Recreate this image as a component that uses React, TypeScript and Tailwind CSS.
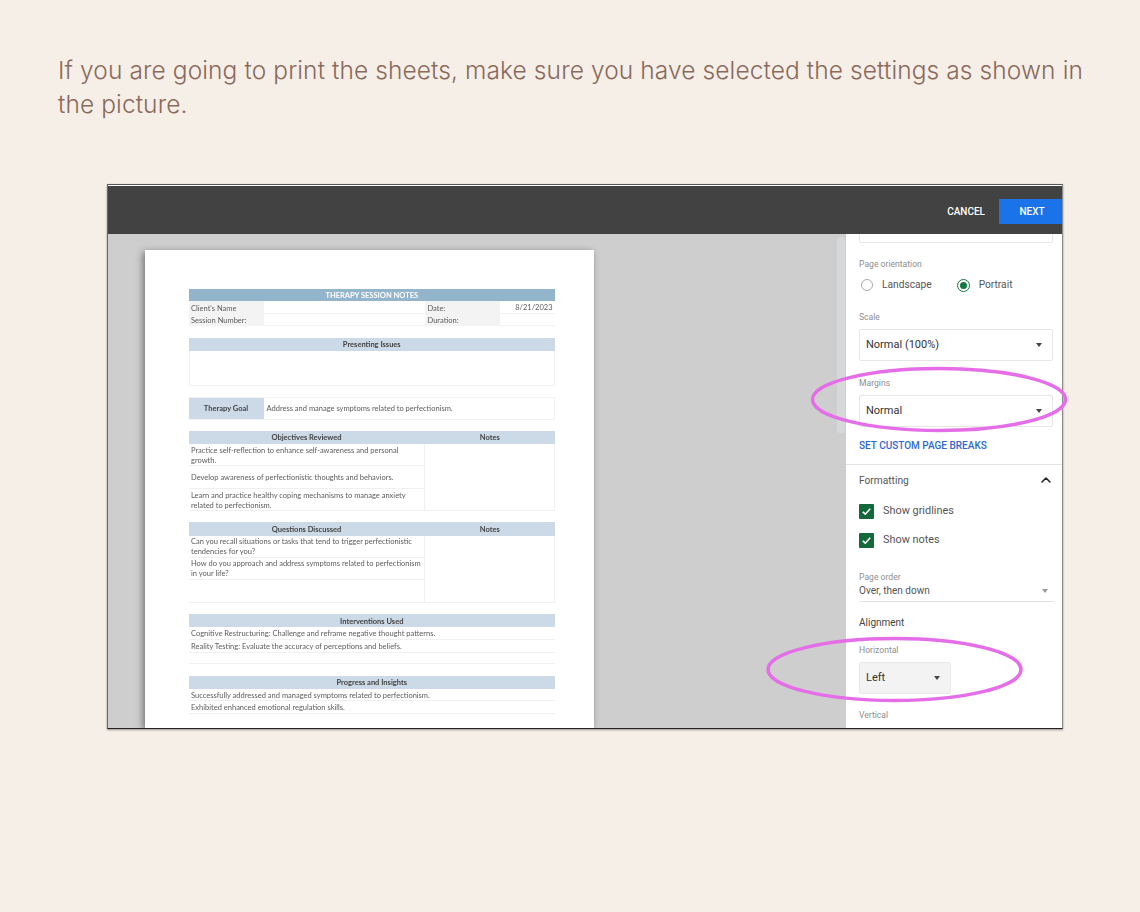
import { ChevronUp } from "lucide-react";

const sheetFont = "font-['Lato','Open_Sans',sans-serif] text-[7.5px] leading-[9px] text-[#5c5c5c]";

function HeaderBar({ label, className = "h-[13px]" }: { label: string; className?: string }) {
  return (
    <div className={`${className} pt-px bg-[#ccd9e7] flex items-center justify-center font-bold text-[#444]`}>
      {label}
    </div>
  );
}

function LineRows({ rows, heights }: { rows: string[]; heights: string[] }) {
  return (
    <div>
      {rows.map((row, i) => (
        <div key={i} className={`${heights[i]} pt-[2.5px] border-b border-[#f0f0f0] pl-[2.5px] flex items-center leading-[10px]`}>
          <span>{row}</span>
        </div>
      ))}
    </div>
  );
}

function TwoColSection({ title, rows, heights }: { title: string; rows: string[]; heights: string[] }) {
  return (
    <div>
      <div className="grid grid-cols-[236px_1fr] h-[13.5px] pt-px bg-[#ccd9e7] items-center font-bold text-[#444] text-center">
        <span>{title}</span>
        <span>Notes</span>
      </div>
      <div className="grid grid-cols-[236px_1fr] border-r border-[#f3f3f3]">
        <div className="border-r border-[#f0f0f0]">
          <LineRows rows={rows} heights={heights} />
        </div>
        <div className="border-b border-[#f0f0f0]" />
      </div>
    </div>
  );
}

function Sheet() {
  return (
    <div className="mt-[16px] w-[449px] h-[478px] bg-white shadow-[-2px_2px_7px_rgba(0,0,0,0.45)] pt-[38.5px] pl-[43.5px] pr-[39px] shrink-0">
      <div className={`${sheetFont} flex flex-col blur-[0.3px]`}>
        <div className="h-[12.5px] pt-px bg-[#93b5cb] flex items-center justify-center font-bold text-white">
          THERAPY SESSION NOTES
        </div>
        <div className="grid grid-cols-[75px_161.5px_75px_1fr] grid-rows-[12.5px_12.5px]">
          <div className="pt-[2px] bg-[#f3f3f3] px-[2.5px] flex items-center">Client's Name</div>
          <div className="border-b border-[#f3f3f3]" />
          <div className="bg-[#f3f3f3] pt-[2px] px-[2.5px] flex items-center">Date:</div>
          <div className="border-b border-[#f3f3f3] pt-[2px] px-[2.5px] flex items-center justify-end">8/21/2023</div>
          <div className="pt-[2px] bg-[#f3f3f3] px-[2.5px] flex items-center">Session Number:</div>
          <div className="border-b border-[#f3f3f3]" />
          <div className="bg-[#f3f3f3] pt-[2px] px-[2.5px] flex items-center">Duration:</div>
          <div className="border-b border-[#f3f3f3]" />
        </div>

        <div className="mt-[11.5px]">
          <HeaderBar label="Presenting Issues" />
          <div className="h-[35px] border-x border-b border-[#f3f3f3]" />
        </div>

        <div className="mt-[11px] h-[23px] grid grid-cols-[75px_1fr] border-y border-r border-[#f3f3f3]">
          <div className="bg-[#ccd9e7] pt-px flex items-center justify-center font-bold text-[#444]">Therapy Goal</div>
          <div className="px-[3px] pt-px flex items-center">Address and manage symptoms related to perfectionism.</div>
        </div>

        <div className="mt-[11px]">
          <TwoColSection
            title="Objectives Reviewed"
            rows={[
              "Practice self-reflection to enhance self-awareness and personal growth.",
              "Develop awareness of perfectionistic thoughts and behaviors.",
              "Learn and practice healthy coping mechanisms to manage anxiety related to perfectionism.",
            ]}
            heights={["h-[21.5px]", "h-[23px]", "h-[22.5px]"]}
          />
        </div>

        <div className="mt-[11px]">
          <TwoColSection
            title="Questions Discussed"
            rows={[
              "Can you recall situations or tasks that tend to trigger perfectionistic tendencies for you?",
              "How do you approach and address symptoms related to perfectionism in your life?",
              "",
            ]}
            heights={["h-[22px]", "h-[22px]", "h-[23px]"]}
          />
        </div>

        <div className="mt-[11.5px]">
          <HeaderBar label="Interventions Used" />
          <LineRows
            rows={[
              "Cognitive Restructuring: Challenge and reframe negative thought patterns.",
              "Reality Testing: Evaluate the accuracy of perceptions and beliefs.",
              "",
            ]}
            heights={["h-[12.5px]", "h-[13px]", "h-[11px]"]}
          />
        </div>

        <div className="mt-[12px]">
          <HeaderBar label="Progress and Insights" />
          <LineRows
            rows={[
              "Successfully addressed and managed symptoms related to perfectionism.",
              "Exhibited enhanced emotional regulation skills.",
            ]}
            heights={["h-[12.5px]", "h-[13px]"]}
          />
        </div>
      </div>
    </div>
  );
}

function Label({ children, className = "" }: { children: string; className?: string }) {
  return <div className={`text-[8.6px] leading-[11px] text-[#8e8e8e] ${className}`}>{children}</div>;
}

function Caret({ color = "border-t-[#444]" }: { color?: string }) {
  return <span className={`w-0 h-0 border-x-[3.5px] border-x-transparent border-t-[4px] ${color}`} />;
}

function SelectBox({ value }: { value: string }) {
  return (
    <div className="h-[32px] w-[194px] border border-[#e6e6e6] rounded-[2px] flex items-center justify-between pl-[6px] pr-[10px] text-[11px] text-[#333]">
      <span>{value}</span>
      <Caret />
    </div>
  );
}

function Check({ label }: { label: string }) {
  return (
    <div className="flex items-center gap-[9.5px] h-[15px]">
      <span className="w-[14.5px] h-[15px] rounded-[1px] bg-[#14693a] flex items-center justify-center">
        <svg width="11" height="11" viewBox="0 0 11 11" fill="none">
          <path d="M1.8 5.8 L4.3 8.2 L9.2 2.8" stroke="white" strokeWidth="1.6" />
        </svg>
      </span>
      <span className="text-[10.9px] text-[#555]">{label}</span>
    </div>
  );
}

function SidePanel() {
  return (
    <div className="w-[216px] h-full bg-white shrink-0 overflow-hidden font-['Roboto',sans-serif]">
      <div className="px-[13px]">
        <div className="h-[9px] w-[194px] border-x border-b border-[#e6e6e6] rounded-b-[2px]" />
        <Label className="mt-[16px]">Page orientation</Label>
        <div className="mt-[8px] flex items-center text-[10.2px] text-[#555] h-[14px]">
          <span className="ml-[2px] w-[12px] h-[12px] rounded-full border border-[#aaaaaa]" />
          <span className="ml-[9px]">Landscape</span>
          <span className="ml-[25px] w-[13px] h-[13px] rounded-full border border-[#14793f] flex items-center justify-center">
            <span className="w-[7px] h-[7px] rounded-full bg-[#14793f]" />
          </span>
          <span className="ml-[9px]">Portrait</span>
        </div>
        <Label className="mt-[20px] mb-[6px]">Scale</Label>
        <SelectBox value="Normal (100%)" />
        <Label className="mt-[17px] mb-[6px]">Margins</Label>
        <SelectBox value="Normal" />
        <div className="mt-[13px] text-[10px] leading-[12px] font-medium text-[#2f69d0]">SET CUSTOM PAGE BREAKS</div>
      </div>
      <div className="mt-[12px] border-t border-[#e3e3e3] px-[13px]">
        <div className="mt-[8px] h-[16px] flex items-center justify-between text-[10.2px] leading-[12px] text-[#555]">
          <span>Formatting</span>
          <ChevronUp size={16} strokeWidth={2.4} className="text-[#222] mr-[-5px] mt-[-2px]" />
        </div>
        <div className="mt-[15px] flex flex-col gap-[14px]">
          <Check label="Show gridlines" />
          <Check label="Show notes" />
        </div>
        <Label className="mt-[24px]">Page order</Label>
        <div className="mt-[2px] h-[17px] w-[195px] border-b border-[#e2e2e2] flex items-start justify-between text-[10px] leading-[12px] text-[#555]">
          <span>Over, then down</span>
          <span className="mt-[4px] mr-[6px] flex">
            <Caret color="border-t-[#9a9a9a]" />
          </span>
        </div>
        <div className="mt-[15px] text-[10px] leading-[12px] text-[#444]">Alignment</div>
        <Label className="mt-[16px]">Horizontal</Label>
        <div className="mt-[6px] h-[32px] w-[92px] bg-[#f3f3f3] border border-[#e8e8e8] rounded-[2px] flex items-center justify-between pl-[6px] pr-[10px] text-[11px] text-[#333]">
          <span>Left</span>
          <Caret />
        </div>
        <Label className="mt-[16px]">Vertical</Label>
      </div>
    </div>
  );
}

export default function App() {
  return (
    <div className="relative w-[1140px] h-[912px] bg-[#f6efe8] overflow-hidden">
      <p className="pt-[53px] pl-[58px] w-[1100px] font-['Inter',sans-serif] font-light text-[24.5px] tracking-[0.1px] leading-[34px] text-[#8a6a5c]">
        If you are going to print the sheets, make sure you have selected the settings as shown in the picture.
      </p>

      <div className="mt-[63px] ml-[107px] w-[956px] h-[545px] border-t border-l border-r border-b border-t-[#555] border-l-[#666] border-r-[#8a8a8a] border-b-[#222] shadow-[0_1px_2px_rgba(0,0,0,0.4)] pt-[1px] bg-white flex flex-col">
        <div className="h-[48px] pt-[3px] bg-[#424242] flex items-center justify-end shrink-0 font-['Roboto',sans-serif] text-[10px] font-medium text-white">
          <span className="mr-[14px]">CANCEL</span>
          <span className="w-[63px] h-[25px] pl-[3px] bg-[#1a73e8] flex items-center justify-center">NEXT</span>
        </div>
        <div className="flex-1 min-h-0 flex overflow-hidden">
          <div className="flex-1 bg-[#cecece] pl-[37px] flex overflow-hidden">
            <Sheet />
            <div className="ml-[243px] mt-[3px] w-[8px] h-[196px] bg-[#d6d8da] rounded-[3px]" />
          </div>
          <SidePanel />
        </div>
      </div>

      <svg className="absolute left-0 top-0 pointer-events-none" width="1140" height="912" fill="none">
        <ellipse cx="939" cy="399.5" rx="126.5" ry="31" stroke="#e56ee8" strokeWidth="3.5" />
        <ellipse cx="894.5" cy="669.5" rx="126.5" ry="31" stroke="#e56ee8" strokeWidth="3.5" />
      </svg>
    </div>
  );
}
